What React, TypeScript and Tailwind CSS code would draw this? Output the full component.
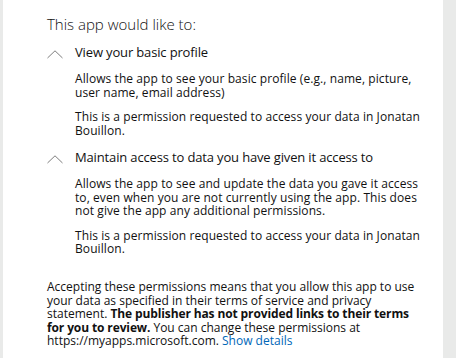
import React from "react";

const font = { fontFamily: '"Open Sans", "Noto Sans", sans-serif' };

function Chevron() {
  return (
    <svg width="16" height="9" viewBox="0 0 16 9" className="mt-[8px] shrink-0">
      <polyline points="0.5,8 8,0.8 15.5,8" fill="none" stroke="#7d7d7d" strokeWidth="1" />
    </svg>
  );
}

function Section({ title, desc }: { title: string; desc: string[] }) {
  return (
    <div className="flex flex-col">
      <div className="flex items-start">
        <Chevron />
        <div className="ml-[12px] text-[13px] tracking-[-0.15px] leading-[20px] whitespace-nowrap">{title}</div>
      </div>
      <div className="pl-[28px] mt-[10px] text-[12px] tracking-[0.08px] leading-[13.5px] whitespace-nowrap">
        <p>
          {desc.map((l, i) => (
            <React.Fragment key={i}>
              {l}
              {i < desc.length - 1 && <br />}
            </React.Fragment>
          ))}
        </p>
        <p className="mt-[11px]">
          This is a permission requested to access your data in Jonatan
          <br />
          Bouillon.
        </p>
      </div>
    </div>
  );
}

export default function App() {
  return (
    <div className="w-[456px] h-[358px] flex bg-[#e9eae9] overflow-hidden text-[#111]" style={font}>
      <div className="w-[3px] shrink-0" />
      <div className="w-[440px] h-full bg-white pl-[44px] pt-[14px]">
        <div className="text-[15px] leading-[20px] font-light whitespace-nowrap">This app would like to:</div>
        <div className="mt-[8px]">
          <Section
            title="View your basic profile"
            desc={[
              "Allows the app to see your basic profile (e.g., name, picture,",
              "user name, email address)",
            ]}
          />
        </div>
        <div className="mt-[10px]">
          <Section
            title="Maintain access to data you have given it access to"
            desc={[
              "Allows the app to see and update the data you gave it access",
              "to, even when you are not currently using the app. This does",
              "not give the app any additional permissions.",
            ]}
          />
        </div>
        <p className="mt-[24.5px] text-[12px] leading-[13.5px] whitespace-nowrap">
          Accepting these permissions means that you allow this app to use
          <br />
          your data as specified in their terms of service and privacy
          <br />
          statement.{" "}
          <span className="font-bold tracking-[-0.12px]">The publisher has not provided links to their terms</span>
          <br />
          <span className="font-bold tracking-[-0.12px]">for you to review.</span> You can change these permissions at
          <br />
          https://myapps.microsoft.com. <span className="text-[#0067b8]">Show details</span>
        </p>
      </div>
    </div>
  );
}
